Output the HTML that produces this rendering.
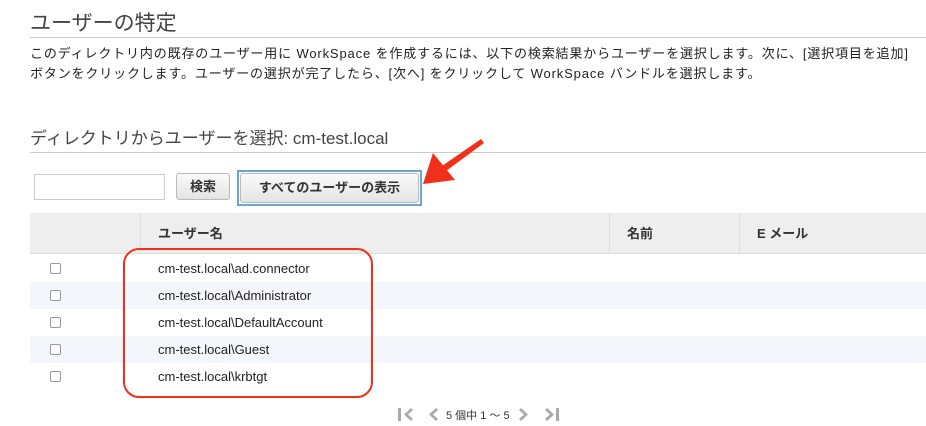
<!DOCTYPE html>
<html><head><meta charset="utf-8"><style>
body{margin:0;width:926px;height:426px;background:#fff;font-family:"Liberation Sans","Noto Sans CJK JP",sans-serif;color:#333;position:relative;overflow:hidden}
.a{position:absolute;white-space:nowrap}
.h1{left:30px;top:7px;font-size:21px;color:#444}
.r1{left:30px;top:37px;width:896px;height:1px;background:#ccc}
.p{left:30px;top:44px;font-size:13px;line-height:20px;color:#222;letter-spacing:0.85px}
.h2{left:30px;top:124px;font-size:17px;color:#444}
.r2{left:30px;top:152px;width:896px;height:1px;background:#ccc}
.inp{left:34px;top:174px;width:131px;height:26px;border:1px solid #ccc;box-sizing:border-box}
.btn{border:1px solid #bbb;border-radius:3px;background:linear-gradient(#fafafa,#e4e4e4);font-size:13px;font-weight:bold;color:#333;text-align:center;box-sizing:border-box}
.th{top:213px;height:41px;background:#eee;font-size:13px;font-weight:bold;line-height:41px;box-sizing:border-box;border-bottom:1px solid #ddd}
.row{left:30px;width:896px;height:27px;font-size:13px;line-height:27px;color:#222}
.cb{position:absolute;left:20px;top:8px;width:11px;height:11px;border:1px solid #999;border-radius:2px;box-sizing:border-box;background:#fff}
</style></head><body>
<div class="a h1">ユーザーの特定</div>
<div class="a r1"></div>
<div class="a p">このディレクトリ内の既存のユーザー用に WorkSpace を作成するには、以下の検索結果からユーザーを選択します。次に、[選択項目を追加]<br>ボタンをクリックします。ユーザーの選択が完了したら、[次へ] をクリックして WorkSpace バンドルを選択します。</div>
<div class="a h2">ディレクトリからユーザーを選択: cm-test.local</div>
<div class="a r2"></div>
<div class="a inp"></div>
<div class="a btn" style="left:176px;top:173px;width:54px;height:27px;line-height:25px">検索</div>
<div class="a" style="left:237px;top:170px;width:185px;height:36px;border:2px solid #6aa5d8;box-sizing:border-box"></div>
<div class="a btn" style="left:240px;top:173px;width:179px;height:30px;line-height:28px">すべてのユーザーの表示</div>
<div class="a th" style="left:30px;width:111px;border-right:1px solid #ddd"></div>
<div class="a th" style="left:141px;width:469px;padding-left:17px;border-right:1px solid #ddd">ユーザー名</div>
<div class="a th" style="left:610px;width:130px;padding-left:17px;border-right:1px solid #ddd">名前</div>
<div class="a th" style="left:740px;width:186px;padding-left:17px">E メール</div>
<div class="a row" style="top:255px"><div class="cb"></div><span style="position:absolute;left:128px">cm-test.local\ad.connector</span></div>
<div class="a row" style="top:282px;background:#f3f6fa"><div class="cb"></div><span style="position:absolute;left:128px">cm-test.local\Administrator</span></div>
<div class="a row" style="top:309px"><div class="cb"></div><span style="position:absolute;left:128px">cm-test.local\DefaultAccount</span></div>
<div class="a row" style="top:336px;background:#f3f6fa"><div class="cb"></div><span style="position:absolute;left:128px">cm-test.local\Guest</span></div>
<div class="a row" style="top:363px"><div class="cb"></div><span style="position:absolute;left:128px">cm-test.local\krbtgt</span></div>
<div class="a" style="left:123px;top:248px;width:250px;height:150px;border:2.5px solid #f0301a;border-radius:16px;box-sizing:border-box"></div>
<svg class="a" style="left:0;top:0" width="926" height="426">
<path d="M481 139 L484 143 L446 171 L442 166 Z" fill="#f0301a"/>
<path d="M423 184 L433 153 L455 180 Z" fill="#f0301a"/>
<g fill="#aaa">
<rect x="398" y="408" width="3" height="13"/>
<path d="M411 408 L404 414.5 L411 421 L413 419 L408 414.5 L413 410Z"/>
<path d="M436 408 L429 414.5 L436 421 L438 419 L433 414.5 L438 410Z"/>
<path d="M521 408 L528 414.5 L521 421 L519 419 L524 414.5 L519 410Z"/>
<path d="M547 408 L554 414.5 L547 421 L545 419 L550 414.5 L545 410Z"/>
<rect x="556" y="408" width="3" height="13"/>
</g>
<text x="446" y="419" font-size="11" fill="#333" font-family="Liberation Sans,Noto Sans CJK JP,sans-serif">5 個中 1 ～ 5</text>
</svg>
</body></html>
